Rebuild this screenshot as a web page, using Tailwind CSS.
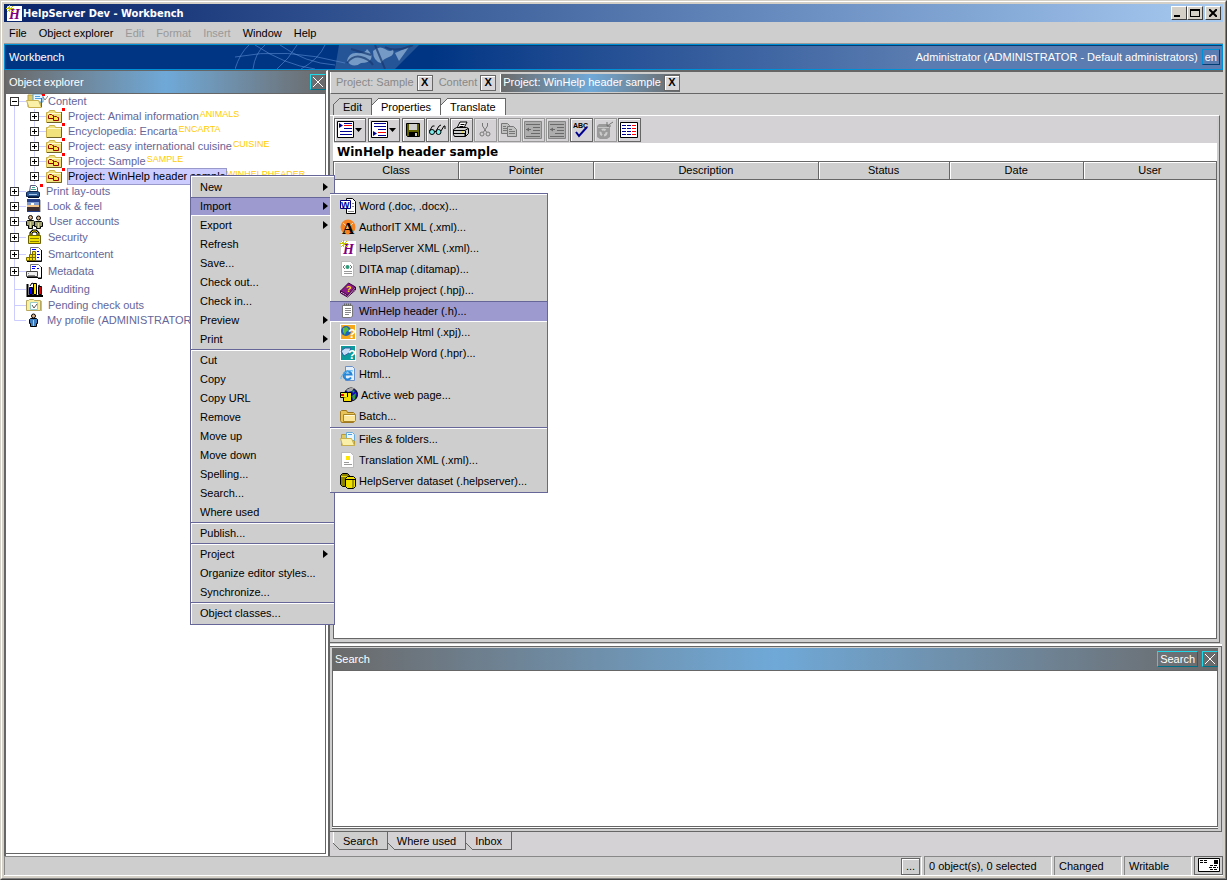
<!DOCTYPE html>
<html lang="en">

<head>
    <meta charset="UTF-8">
    <meta name="viewport" content="width=device-width, initial-scale=1.0">
    <script src="https://cdn.jsdelivr.net/npm/@tailwindcss/browser@4"></script>
    <title>HelpServer Dev - Workbench</title>
</head>

<body class="bg-[#d4d0c8] font-['Liberation_Sans',Arial,sans-serif] text-[11px] leading-[15px] text-black">

    <!-- Icon sprite -->
    <svg class="hidden" xmlns="http://www.w3.org/2000/svg">
        <!-- tree connectors -->
        <symbol id="t-plus" viewBox="0 0 20 19">
            <path d="M8.5 0v19M13 9.5h7" stroke="#ccccff" fill="none" />
            <rect x="4.5" y="5.5" width="8" height="8" fill="#fff" stroke="#333" />
            <path d="M6 9.5h5M8.5 7v5" stroke="#000" fill="none" />
        </symbol>
        <symbol id="t-minus" viewBox="0 0 20 19">
            <path d="M8.5 10v9M13 9.5h7" stroke="#ccccff" fill="none" />
            <rect x="4.5" y="5.5" width="8" height="8" fill="#fff" stroke="#333" />
            <path d="M6 9.5h5" stroke="#000" fill="none" />
        </symbol>
        <symbol id="t-line" viewBox="0 0 20 19">
            <path d="M8.5 0v19" stroke="#ccccff" fill="none" />
        </symbol>
        <symbol id="t-tee" viewBox="0 0 20 19">
            <path d="M8.5 0v19M8 9.5h12" stroke="#ccccff" fill="none" />
        </symbol>
        <symbol id="t-end" viewBox="0 0 20 19">
            <path d="M8.5 0v9.5h12" stroke="#ccccff" fill="none" />
        </symbol>

        <symbol id="i-folder" viewBox="0 0 20 16">
            <path d="M.5 4.500h2l1-2h5l1 2h6v10H.5z" fill="#f2e27e" stroke="#c9b04a" />
            <path d="M2 5.500h13" stroke="#fffbd0" />
            <path d="M1 14.500h14.500V4" fill="none" stroke="#6e6228" />
            <path d="M16 0h3v3h-3z" fill="#f00" />
        </symbol>
        <symbol id="i-project" viewBox="0 0 20 16">
            <path d="M.5 4.500h2l1-2h5l1 2h6v10H.5z" fill="#f2e27e" stroke="#c9b04a" />
            <path d="M2 5.500h13" stroke="#fffbd0" />
            <path d="M1 14.500h14.500V4" fill="none" stroke="#6e6228" />
            <path d="M2.500 10.500v-3l1-1h2l1 1h1v3zM7.500 12.500v-3l1-1h2l1 1h1v3z" fill="#ffe84a" stroke="#900000" />
            <path d="M16 0h3v3h-3z" fill="#f00" />
        </symbol>
        <symbol id="i-open" viewBox="0 0 22 16">
            <path d="M2 2h5l1 2h7v10H2z" fill="#dfca62" stroke="#b89c3c" />
            <path d="M7 1h8l2 2v6H7z" fill="#e8f6ff" stroke="#5a9ed0" />
            <path d="M9 3.500h5M9 5.500h6" stroke="#4aa0e0" />
            <path d="M0.500 7.500h12l3 7H3z" fill="#faf0a8" stroke="#c8b050" />
            <path d="M15.500 14V5" stroke="#6e6228" />
            <path d="M17 4l2 3 3-4" stroke="#808080" fill="none" />
            <path d="M16 0h3v3h-3z" fill="#f00" />
        </symbol>
        <symbol id="i-print" viewBox="0 0 18 15">
            <path d="M4.500 1.500h5l2 2v5h-8z" fill="#fff" stroke="#557" />
            <path d="M6 3.500h3M5 5.500h5" stroke="#3aa08c" />
            <path d="M.5 8.500l2-1h9l2 1v4H.5z" fill="#2d5a94" stroke="#0c2350" />
            <path d="M3 10.500h8" stroke="#a9c8ee" />
            <path d="M2 13.500h11" stroke="#001030" />
            <path d="M14 0h3v3h-3z" fill="#f00" />
        </symbol>
        <symbol id="i-look" viewBox="0 0 16 14">
            <path d="M1 0h13v13H1z" fill="#27408a" />
            <path d="M1 3h12v3H1z" fill="#7f9ad0" />
            <path d="M1 6h12v2H1z" fill="#f2c48c" />
            <path d="M5 4h3v2H5z" fill="#fff" />
            <path d="M1 8h12v4H1z" fill="#3c2c30" />
            <path d="M14.500 1v12" stroke="#bbb" />
        </symbol>
        <symbol id="i-users" viewBox="0 0 17 15">
            <circle cx="4.500" cy="3.500" r="2" fill="#e0b890" stroke="#000" />
            <circle cx="12.500" cy="4" r="2" fill="#e0b890" stroke="#000" />
            <path d="M.5 7.500l1-1h6l1 1v4h-2v3h-4v-3h-2zM8.500 8.500l1-1h6l1 1v4h-2v2h-4v-2h-2z" fill="#a0a070" stroke="#000" />
            <path d="M4.500 8v6M12.500 9v5" stroke="#d8d8a0" />
        </symbol>
        <symbol id="i-lock" viewBox="0 0 14 16">
            <path d="M4 7V4l2-2h3l2 2v3" fill="none" stroke="#000" stroke-width="3" />
            <path d="M4 7V4l2-2h3l2 2v3" fill="none" stroke="#e8d800" />
            <path d="M1.500 6.500h12v8h-12z" fill="#f0e000" stroke="#6a6000" />
            <path d="M3 9.500h9M3 12.500h9" stroke="#8a8000" />
        </symbol>
        <symbol id="i-smart" viewBox="0 0 17 16">
            <path d="M4.500 1.500h8l3 3v10h-11z" fill="#fff" stroke="#777" />
            <path d="M6 3.500h4M11 5.500h2M8 6.500h2M11 8.500h3M11 11.500h2" stroke="#00f" />
            <path d="M.5 11.500h3v-3h3v-3h3v9H.5z" fill="#f8e400" stroke="#7a6c00" />
            <path d="M3.500 11v4M6.500 8v7M1 11.500h9M4 8.500h6" stroke="#7a6c00" />
            <path d="M1 15.500h14.500V4" fill="none" stroke="#000" />
        </symbol>
        <symbol id="i-meta" viewBox="0 0 17 16">
            <path d="M4.500 1.500h8l3 3v10h-11z" fill="#fff" stroke="#777" />
            <path d="M6 3.500h4M6 5.500h3M11 5.500h2" stroke="#00f" />
            <path d="M.5 8.500h11v5H.5z" fill="#eee" stroke="#444" />
            <path d="M2 10.500h1M2 12.500h7" stroke="#888" />
            <path d="M1 14.500h11M12 15.500h3.500V4" fill="none" stroke="#000" />
        </symbol>
        <symbol id="i-audit" viewBox="0 0 18 16">
            <path d="M1.500 3v12H17" fill="none" stroke="#000" stroke-width="2" />
            <path d="M3.500 6.500h3v7h-3z" fill="#00f" stroke="#000" />
            <path d="M7.500 2.500h3v11h-3z" fill="#ffe600" stroke="#000" />
            <path d="M12.500 5.500h3v8h-3z" fill="#e00000" stroke="#000" />
            <path d="M4 5l2-3 2 1M12 5l2-1" stroke="#000" fill="none" />
        </symbol>
        <symbol id="i-pending" viewBox="0 0 17 14">
            <path d="M.5 2.500h2l1-1h4l1 1h6v10H.5z" fill="#f8f0a0" stroke="#b8a860" />
            <path d="M4.500 4.500h7v7h-7z" fill="#fff" stroke="#9cc" />
            <path d="M6 7l2 3 3-4" fill="none" stroke="#555" />
            <path d="M15.500 3v10" stroke="#bbb" />
        </symbol>
        <symbol id="i-person" viewBox="0 0 14 14">
            <circle cx="7.500" cy="3" r="2" fill="#e0b890" stroke="#000" />
            <path d="M3.500 6.500l1-1h6l1 1v4h-1v3h-6v-3h-1z" fill="#3e7cc0" stroke="#000" />
            <path d="M7.500 7v6" stroke="#9cd0ff" />
        </symbol>

        <!-- import menu icons -->
        <symbol id="i-hs" viewBox="0 0 16 16">
            <path d="M1 1h15v15H1z" fill="#fff" />
            <text x="3" y="14" font-family="Liberation Serif" font-size="14" font-weight="bold" font-style="italic" fill="#800080">H</text>
            <path d="M1 1l6 6M7 1L1 7M3.500 0v7M0 3.500h8" stroke="#c8c800" />
        </symbol>
        <symbol id="i-word" viewBox="0 0 16 16">
            <path d="M6.500.5h6l3 3v12h-9z" fill="#fff" stroke="#000" />
            <path d="M12 5.500h2M12 8.500h2M8 13.500h6" stroke="#888" />
            <path d="M.5 2.500h10v8H.5z" fill="#fff" stroke="#000080" />
            <text x="1" y="10" font-family="Liberation Sans" font-size="9" font-weight="bold" fill="#0000a0">W</text>
        </symbol>
        <symbol id="i-author" viewBox="0 0 16 16">
            <circle cx="8" cy="8" r="7.500" fill="#f58220" />
            <path d="M3 4l10 9M4 12l9-8" stroke="#ffd9b0" />
            <text x="2" y="15" font-family="Liberation Serif" font-size="17" font-weight="bold" fill="#000">A</text>
        </symbol>
        <symbol id="i-dita" viewBox="0 0 16 16">
            <path d="M1.500.5h9l3 3v12h-12z" fill="#fff" stroke="#bbb" />
            <path d="M5 4L3 6l2 2M10 4l2 2-2 2" fill="none" stroke="#777" />
            <circle cx="7.500" cy="6" r="2" fill="#2e9a7a" />
            <path d="M4 10.500h8M4 12.500h8" stroke="#999" />
        </symbol>
        <symbol id="i-book" viewBox="0 0 16 16">
            <path d="M.5 9l8-8 7 4-8 8z" fill="#8a1a8a" stroke="#400040" />
            <path d="M.5 9l7 4 8-8v3l-8 7-7-4z" fill="#fff" stroke="#400040" />
            <path d="M1 11l6 3 8-7" fill="none" stroke="#600060" />
            <text x="6" y="10" font-family="Liberation Sans" font-size="9" font-weight="bold" fill="#ffe000">?</text>
        </symbol>
        <symbol id="i-note" viewBox="0 0 16 16">
            <path d="M2.500 2.500h10v11l-2 1h-8z" fill="#fff" stroke="#777" />
            <path d="M4 1.500h8" stroke="#666" stroke-dasharray="1 1" stroke-width="2" />
            <path d="M5 5.500h6M5 7.500h6M5 9.500h6M5 11.500h4" stroke="#888" />
        </symbol>
        <symbol id="i-rhtml" viewBox="0 0 16 16">
            <path d="M0 0h16v16H0z" fill="#fff" />
            <path d="M1 1h14v14H1z" fill="#f5a81c" />
            <circle cx="6" cy="7" r="5" fill="#1c62b8" />
            <path d="M3 4l4-1 2 3-3 2-1 3-2-3z" fill="#5dbb3c" />
            <text x="8" y="14" font-family="Liberation Sans" font-size="13" font-weight="bold" fill="#fff">?</text>
        </symbol>
        <symbol id="i-rword" viewBox="0 0 16 16">
            <path d="M0 0h16v16H0z" fill="#fff" />
            <path d="M1 1h14v14H1z" fill="#0d9a9a" />
            <path d="M1 6l4-3h6l-2 5-5 3z" fill="#c8dcf4" stroke="#2860a0" />
            <text x="8" y="14" font-family="Liberation Sans" font-size="13" font-weight="bold" fill="#fff">?</text>
        </symbol>
        <symbol id="i-ie" viewBox="0 0 16 16">
            <path d="M5.500.5h7l2 2v12h-9z" fill="#e4f0fc" stroke="#6a90c8" />
            <path d="M11 11.500a4 4 0 1 1 .5-3H4" fill="none" stroke="#2484d8" stroke-width="2" />
            <path d="M1 13C0 9 8 3 13 5" fill="none" stroke="#58b4f0" />
        </symbol>
        <symbol id="i-web" viewBox="0 0 18 16">
            <circle cx="11" cy="7.500" r="6.500" fill="#1010b0" stroke="#000" />
            <path d="M6 3l4-2h4l-2 3-4 1z" fill="#aaa" />
            <path d="M12 9l4-3-1 6-2 1zM12 3l3 1-2 2z" fill="#2f9a3c" />
            <path d="M6.500 9.500v-4h5v7h-8v-2z" fill="#f8e000" stroke="#000" />
            <path d="M.5 5.500h7v5h-7z" fill="#ffec20" stroke="#000" />
            <path d="M3.500 10.500v4h8v-5" fill="#f8e000" stroke="#000" />
            <path d="M1 7h3v2H1z" fill="#f00" />
        </symbol>
        <symbol id="i-batch" viewBox="0 0 16 16">
            <path d="M.5 12.500v-9l1-1h5l1 2h6l1 1v8l-1 1h-12z" fill="#e8c458" stroke="#a07820" />
            <path d="M3.500 6.500h12v6l-1 1h-11z" fill="#fbe69a" stroke="#a88428" />
            <path d="M4.500 7.500h10" stroke="#fffbe0" />
        </symbol>
        <symbol id="i-files" viewBox="0 0 16 16">
            <path d="M1.500 3.500h5l1 1h7v10h-13z" fill="#dfca62" stroke="#b89c3c" />
            <path d="M6.500 1.500h6l2 2v6h-8z" fill="#eaf6ff" stroke="#6aaad8" />
            <path d="M8 3.500h4" stroke="#4aa0e0" />
            <path d="M.5 7.500h11l3 7h-12z" fill="#faf0a8" stroke="#c8b050" />
        </symbol>
        <symbol id="i-trans" viewBox="0 0 16 16">
            <path d="M1.500.5h9l3 3v12h-12z" fill="#fff" stroke="#bbb" />
            <path d="M6 4h4v4H6z" fill="#ffe600" />
            <path d="M4 10.500h5M4 12.500h8" stroke="#999" />
        </symbol>
        <symbol id="i-data" viewBox="0 0 16 16">
            <path d="M.5 2.500l2-2h5l2 2v9l-2 2h-5l-2-2z" fill="#8c8400" stroke="#000" />
            <path d="M1 3.500h8" stroke="#e8dc00" />
            <path d="M5.500 5.500l2-2h6l2 2v8l-2 2h-6l-2-2z" fill="#f0e000" stroke="#000" />
            <path d="M6 6.500h9" stroke="#000" />
            <path d="M13 7v8" stroke="#a09800" stroke-width="2" />
        </symbol>

        <!-- toolbar icons -->
        <symbol id="b-above" viewBox="0 0 18 18">
            <path d="M.5.5h16v16H.5z" fill="#fff" stroke="#000" />
            <path d="M2 2v5l4-2.500z" fill="#000090" />
            <path d="M7 4.500h8" stroke="#f00" />
            <path d="M7 2.500h8M7 7.500h8M3 10.500h12M3 13.500h12" stroke="#000090" />
        </symbol>
        <symbol id="b-below" viewBox="0 0 18 18">
            <path d="M.5.5h16v16H.5z" fill="#fff" stroke="#000" />
            <path d="M2 10v5l4-2.500z" fill="#000090" />
            <path d="M7 11.500h8" stroke="#f00" />
            <path d="M3 2.500h12M3 5.500h12M7 8.500h8M7 14.500h8" stroke="#000090" />
        </symbol>
        <symbol id="b-save" viewBox="0 0 16 16">
            <path d="M1.500 1.500h13v13h-12l-1-1z" fill="#606000" stroke="#000" />
            <path d="M4 2h8v6H4z" fill="#cecece" />
            <path d="M4 10h9v5H4z" fill="#000" />
            <path d="M10 11h2v3h-2z" fill="#cecece" />
        </symbol>
        <symbol id="b-glasses" viewBox="0 0 18 16">
            <circle cx="4" cy="10" r="2.500" fill="#7ff0f0" stroke="#000" />
            <circle cx="10.500" cy="10" r="2.500" fill="#7ff0f0" stroke="#000" />
            <path d="M1.500 9l3-5h2M8 9l3-5 2-1M6.500 9.500h2M13 9l3-5h1v3" fill="none" stroke="#000" />
        </symbol>
        <symbol id="b-print" viewBox="0 0 18 17">
            <path d="M5 7l3-6h7l-3 6z" fill="#fff" stroke="#000" />
            <path d="M8.500 3.500h4M7.500 5.500h4" stroke="#000" />
            <path d="M1.500 8.500l3-2h10l2 1v5l-3 3h-11l-1-2z" fill="#cecece" stroke="#000" />
            <path d="M2 9.500h11l3-2M2 12.500h11v3M13.500 10v5" fill="none" stroke="#000" />
            <path d="M9 11h3" stroke="#ffe600" />
        </symbol>
        <symbol id="b-cut" viewBox="0 0 16 16">
            <path d="M5.500 1v3l4 6M10.500 1v3l-4 6" fill="none" stroke="#777" />
            <circle cx="5" cy="12" r="2" fill="none" stroke="#777" />
            <circle cx="11" cy="12" r="2" fill="none" stroke="#777" />
        </symbol>
        <symbol id="b-copy" viewBox="0 0 16 16">
            <path d="M.5 1.500h6l2 2v8h-8z" fill="#c0c0c0" stroke="#777" />
            <path d="M2 4.500h3M2 6.500h4M2 8.500h4" stroke="#777" />
            <path d="M6.500 4.500h6l3 3v7h-9z" fill="#c0c0c0" stroke="#777" />
            <path d="M8 7.500h3M8 9.500h6M8 11.500h6" stroke="#777" />
        </symbol>
        <symbol id="b-indent" viewBox="0 0 18 18">
            <path d="M.5.500h17v17H.5z" fill="#adadad" stroke="#858585" />
            <path d="M2 3.500h14M9 6.500h7M9 9.500h7M7 12.500h9M2 15.500h14M2 8.500h5" stroke="#6a6a6a" />
            <path d="M2 8.500l3-2v4z" fill="#6a6a6a" />
        </symbol>
        <symbol id="b-spell" viewBox="0 0 18 18">
            <text x="1" y="7" font-family="Liberation Sans" font-size="7" font-weight="bold" fill="#000">ABC</text>
            <path d="M4 11l3 4 8-9" fill="none" stroke="#000090" stroke-width="2" />
        </symbol>
        <symbol id="b-bin" viewBox="0 0 18 18">
            <path d="M1 5l2-2h8l3 2v11l-3 2H4l-3-2z" fill="#9a9a9a" />
            <path d="M2 6.500h11" stroke="#c4c4c4" />
            <circle cx="7.500" cy="11.500" r="3" fill="none" stroke="#ccc" stroke-width="2" stroke-dasharray="4 2" />
            <path d="M11 5l6-4M11 1v4h4" fill="none" stroke="#777" />
        </symbol>
        <symbol id="b-list" viewBox="0 0 18 18">
            <path d="M.5 1.500h17v15H.5z" fill="#fff" stroke="#000" />
            <path d="M2 4.500h4M7 4.500h4M2 7.500h4M7 7.500h4M2 10.500h4M7 10.500h4M2 13.500h4M7 13.500h4" stroke="#000090" />
            <path d="M12 4.500h4M12 7.500h4M12 10.500h4M12 13.500h4" stroke="#f00" />
        </symbol>
        <symbol id="b-mail" viewBox="0 0 22 14">
            <path d="M.5.500h21v13H.5z" fill="#fff" stroke="#000" />
            <path d="M2 2.500h7M2 4.500h7M12 7.500h8M11 9.500h9M12 11.500h7" stroke="#000" stroke-dasharray="3 1" />
            <path d="M16 2h4v4h-4z" fill="#000" />
        </symbol>

        <symbol id="x" viewBox="0 0 12 12">
            <path d="M1 1l10 10M11 1L1 11" stroke="#fff" fill="none" />
        </symbol>
        <symbol id="arrow" viewBox="0 0 5 8">
            <path d="M0 0v8l5-4z" fill="#000" />
        </symbol>
        <symbol id="corner" viewBox="0 0 7 7">
            <path d="M0 0h7L0 7z" fill="#cecece" />
            <path d="M0 7l7-7" stroke="#666" fill="none" />
        </symbol>
    </svg>

    <main class="relative flex h-screen min-h-[660px] flex-col border border-[#d4d0c8] border-r-[#404040] border-b-[#404040]">
        <div class="flex min-h-0 flex-1 flex-col border border-white border-r-[#808080] border-b-[#808080] p-0.5">

            <!-- Title bar -->
            <header class="flex h-[18px] shrink-0 items-center bg-linear-to-r from-[#0a246a] to-[#a6caf0] pr-0.5 pl-0.5">
                <svg class="size-4"><use href="#i-hs" /></svg>
                <h1 class="ml-px flex-1 font-['DejaVu_Sans_Condensed','DejaVu_Sans',sans-serif] text-[11px] font-bold text-white">HelpServer Dev - Workbench</h1>
                <button aria-label="Minimize" class="flex h-3.5 w-4 items-end border border-white border-r-[#404040] border-b-[#404040] bg-[#d4d0c8] p-0.5"><span class="h-0.5 w-1.5 bg-black"></span></button>
                <button aria-label="Maximize" class="h-3.5 w-4 border border-white border-r-[#404040] border-b-[#404040] bg-[#d4d0c8] p-0.5"><span class="block h-full w-2.5 border border-t-2 border-black"></span></button>
                <button aria-label="Close" class="ml-0.5 flex h-3.5 w-4 items-center justify-center border border-white border-r-[#404040] border-b-[#404040] bg-[#d4d0c8]"><svg class="size-2" viewBox="0 0 8 8"><path d="M0 0l8 8M8 0L0 8" stroke="#000" stroke-width="2" /></svg></button>
            </header>

            <!-- Menu bar -->
            <nav class="flex h-[22px] shrink-0 items-center gap-3 border-b border-[#999] bg-[#cecece] px-[5px] pt-px">
                <button>File</button>
                <button>Object explorer</button>
                <button class="text-[#999]" disabled>Edit</button>
                <button class="text-[#999]" disabled>Format</button>
                <button class="text-[#999]" disabled>Insert</button>
                <button>Window</button>
                <button>Help</button>
            </nav>

            <!-- Banner -->
            <div class="relative flex h-[26px] shrink-0 items-center overflow-hidden border border-[#0090d8] bg-linear-to-r from-[#003584] from-35% to-[#5a7cb0] to-75% pr-0.5 pl-1 text-white shadow-[inset_1px_1px_#003c74]">
                <svg class="absolute top-0 left-[230px] h-6 w-[200px]" viewBox="0 0 200 24" fill="none">
                    <path d="M104 0h80l-24 24h-60z" fill="#3f6aa4" opacity=".6" />
                    <path d="M0 24Q5 8 14 0M18 24Q20 8 30 0M42 24Q54 14 62 0M66 24Q84 14 90 0M20 0Q50 20 80 24M45 0Q70 18 100 20M0 12Q50 2 110 18" stroke="#5c8cd0" opacity=".6" />
                    <path d="M112 16q2-9 10-8t10-4q6 6 4 10t-10 4q-8 6-14-2zM138 6q6-6 12-2t8 0q2 6-4 8t-8 6q-8-2-8-12zM160 8l14-6-10 14z" fill="#a9c8e4" opacity=".6" />
                    <path d="M112 18q6-8 14-6t12 8M140 0l10 24M150 2q10 6 28-2M116 4l20 6" stroke="#17376f" stroke-width="2" opacity=".7" />
                </svg>
                <h2 class="relative flex-1">Workbench</h2>
                <span class="mr-1">Administrator (ADMINISTRATOR - Default administrators)</span>
                <button class="h-4 border border-[#0090d8] border-r-[#003c74] border-b-[#003c74] px-0.5 leading-[14px]">en</button>
            </div>

            <div class="flex min-h-0 flex-1 bg-[#cecece]">
                <!-- Object explorer -->
                <aside class="flex w-[324px] shrink-0 flex-col border-t border-r-2 border-l-2 border-[#666] border-r-white">
                    <div class="flex h-[23px] shrink-0 items-center border-b border-[#666] bg-linear-to-r from-[#6a6a6a] via-[#6fa9d8] to-[#6a6a6a] pl-[3px] text-white">
                        <h2 class="flex-1">Object explorer</h2>
                        <button aria-label="Close explorer" class="flex size-4 items-center justify-center border border-[#20d8e8] border-r-[#007088] border-b-[#007088]"><svg class="size-3"><use href="#x" /></svg></button>
                    </div>
                    <ul class="flex-1 overflow-hidden border-r border-b border-[#666] bg-white whitespace-nowrap text-[#666699]">
                        <li class="flex h-[15px] items-center"><svg class="h-full w-5"><use href="#t-minus" y="-2" height="19" /></svg><svg class="mb-px h-4 w-[22px]"><use href="#i-open" /></svg>Content</li>
                        <li class="flex h-[15px] items-center"><svg class="h-full w-5"><use href="#t-line" y="-2" height="19" /></svg><svg class="h-full w-5"><use href="#t-plus" y="-2" height="19" /></svg><svg class="mr-0.5 mb-px h-4 w-5"><use href="#i-project" /></svg>Project: Animal information<span class="mb-1 ml-px text-[9px] text-[#ffcc00]">ANIMALS</span></li>
                        <li class="flex h-[15px] items-center"><svg class="h-full w-5"><use href="#t-line" y="-2" height="19" /></svg><svg class="h-full w-5"><use href="#t-plus" y="-2" height="19" /></svg><svg class="mr-0.5 mb-px h-4 w-5"><use href="#i-folder" /></svg>Encyclopedia: Encarta<span class="mb-1 ml-px text-[9px] text-[#ffcc00]">ENCARTA</span></li>
                        <li class="flex h-[15px] items-center"><svg class="h-full w-5"><use href="#t-line" y="-2" height="19" /></svg><svg class="h-full w-5"><use href="#t-plus" y="-2" height="19" /></svg><svg class="mr-0.5 mb-px h-4 w-5"><use href="#i-project" /></svg>Project: easy international cuisine<span class="mb-1 ml-px text-[9px] text-[#ffcc00]">CUISINE</span></li>
                        <li class="flex h-[15px] items-center"><svg class="h-full w-5"><use href="#t-line" y="-2" height="19" /></svg><svg class="h-full w-5"><use href="#t-plus" y="-2" height="19" /></svg><svg class="mr-0.5 mb-px h-4 w-5"><use href="#i-project" /></svg>Project: Sample<span class="mb-1 ml-px text-[9px] text-[#ffcc00]">SAMPLE</span></li>
                        <li class="flex h-[15px] items-center"><svg class="h-full w-5"><use href="#t-line" y="-2" height="19" /></svg><svg class="h-full w-5"><use href="#t-plus" y="-2" height="19" /></svg><svg class="mr-0.5 mb-px h-4 w-5"><use href="#i-project" /></svg><span class="bg-[#ccccff] text-black outline outline-[#9999cc]">Project: WinHelp header sample</span><span class="mb-1 ml-px text-[9px] text-[#ffcc00]">WINHELPHEADER</span></li>
                        <li class="flex h-[15px] items-center"><svg class="h-full w-5"><use href="#t-plus" y="-2" height="19" /></svg><svg class="mr-0.5 h-[15px] w-[18px]"><use href="#i-print" /></svg>Print lay-outs</li>
                        <li class="flex h-[15px] items-center"><svg class="h-full w-5"><use href="#t-plus" y="-2" height="19" /></svg><svg class="mr-[5px] mb-px h-3.5 w-4"><use href="#i-look" /></svg>Look &amp; feel</li>
                        <li class="flex h-[15px] items-center"><svg class="h-full w-5"><use href="#t-plus" y="-2" height="19" /></svg><svg class="mr-1.5 h-[15px] w-[17px]"><use href="#i-users" /></svg>User accounts</li>
                        <li class="flex h-[17px] items-center"><svg class="h-full w-5"><use href="#t-plus" y="-1" height="19" /></svg><svg class="mr-[7px] mb-px ml-px h-4 w-3.5"><use href="#i-lock" /></svg>Security</li>
                        <li class="flex h-[17px] items-center"><svg class="h-full w-5"><use href="#t-plus" y="-1" height="19" /></svg><svg class="mr-[5px] mb-px h-4 w-[17px]"><use href="#i-smart" /></svg>Smartcontent</li>
                        <li class="flex h-[17px] items-center"><svg class="h-full w-5"><use href="#t-plus" y="-1" height="19" /></svg><svg class="mr-[5px] mb-px h-4 w-[17px]"><use href="#i-meta" /></svg>Metadata</li>
                        <li class="flex h-[18px] items-center"><svg class="h-full w-5"><use href="#t-tee" height="19" /></svg><svg class="mr-1.5 h-4 w-[18px]"><use href="#i-audit" /></svg>Auditing</li>
                        <li class="flex h-[15px] items-center"><svg class="h-full w-5"><use href="#t-tee" y="-2" height="19" /></svg><svg class="mr-[5px] mb-px h-3.5 w-[17px]"><use href="#i-pending" /></svg>Pending check outs</li>
                        <li class="flex h-[15px] items-center"><svg class="h-full w-5"><use href="#t-end" y="-2" height="19" /></svg><svg class="mr-[7px] mb-px h-3.5 w-3.5"><use href="#i-person" /></svg>My profile (ADMINISTRATOR)</li>
                    </ul>
                    <div class="h-0.5 shrink-0 bg-white"></div>
                </aside>

                <div class="flex min-w-0 flex-1 flex-col border-t-2 border-l-2 border-[#666]">
                    <!-- Open documents -->
                    <div class="flex h-[22px] shrink-0 items-center border-b border-l border-[#666] border-l-white pl-[5px] text-[#888]">
                        <a href="#">Project: Sample</a>
                        <button aria-label="Close Project: Sample" class="ml-[3px] flex size-4 items-center justify-center border border-[#666] bg-[#d8d6d8] font-bold text-black shadow-[inset_1px_1px_#fff]">X</button>
                        <a href="#" class="ml-1.5">Content</a>
                        <button aria-label="Close Content" class="ml-[3px] flex size-4 items-center justify-center border border-[#666] bg-[#d8d6d8] font-bold text-black shadow-[inset_1px_1px_#fff]">X</button>
                        <div class="ml-1 flex h-[18px] items-center border-l border-white bg-linear-to-r from-[#6a6a6a] via-[#6fa9d8] to-[#6a6a6a] pl-0.5 text-white">
                            <a href="#">Project: WinHelp header sample</a>
                            <button aria-label="Close Project: WinHelp header sample" class="ml-[3px] flex size-4 items-center justify-center border border-[#666] bg-[#d8d6d8] font-bold text-black shadow-[inset_1px_1px_#fff]">X</button>
                        </div>
                    </div>

                    <!-- View tabs -->
                    <div class="flex h-[21px] shrink-0 items-end pl-[3px]">
                        <button class="relative h-[17px] border-t border-r border-l border-[#666] bg-[#cecece] px-[9px] leading-4"><svg class="absolute -top-px -left-px size-[7px]"><use href="#corner" /></svg>Edit</button>
                        <button class="relative h-[17px] border-t border-r border-[#666] bg-white px-[9px] leading-4"><svg class="absolute -top-px left-0 size-[7px]"><use href="#corner" /></svg>Properties</button>
                        <button class="relative h-[17px] border-t border-r border-[#666] bg-white px-[9px] leading-4"><svg class="absolute -top-px left-0 size-[7px]"><use href="#corner" /></svg>Translate</button>
                    </div>

                    <section class="mr-[3px] flex min-h-0 flex-1 flex-col border-t border-r border-b border-white border-r-[#666] border-b-[#666] pr-0.5 pb-[3px] pl-[3px]">
                        <!-- Toolbar -->
                        <div class="flex h-[27px] shrink-0 items-center gap-0.5 border-l border-white bg-[#d4d2d4]">
                            <button aria-label="Insert above" class="flex h-6 w-8 items-center justify-between border border-[#666] px-0.5 shadow-[inset_1px_1px_#fff]"><svg class="size-[18px]"><use href="#b-above" /></svg><svg class="mr-px h-1 w-[7px]" viewBox="0 0 7 4"><path d="M0 0h7L3.500 4z" /></svg></button>
                            <button aria-label="Insert below" class="flex h-6 w-8 items-center justify-between border border-[#666] px-0.5 shadow-[inset_1px_1px_#fff]"><svg class="size-[18px]"><use href="#b-below" /></svg><svg class="mr-px h-1 w-[7px]" viewBox="0 0 7 4"><path d="M0 0h7L3.500 4z" /></svg></button>
                            <div class="flex gap-px [&_svg]:mr-px">
                                <button aria-label="Save" class="flex h-6 w-[23px] items-center justify-center border border-[#666] shadow-[inset_1px_1px_#fff]"><svg class="size-4"><use href="#b-save" /></svg></button>
                                <button aria-label="View" class="flex h-6 w-[23px] items-center justify-center border border-[#666] shadow-[inset_1px_1px_#fff]"><svg class="h-4 w-[18px]"><use href="#b-glasses" /></svg></button>
                                <button aria-label="Print" class="flex h-6 w-[23px] items-center justify-center border border-[#666] shadow-[inset_1px_1px_#fff]"><svg class="mb-px h-[17px] w-[18px]"><use href="#b-print" /></svg></button>
                                <button aria-label="Cut" disabled class="flex h-6 w-[23px] items-center justify-center border border-[#999] shadow-[inset_1px_1px_#e4e4e4]"><svg class="size-4"><use href="#b-cut" /></svg></button>
                                <button aria-label="Copy" disabled class="flex h-6 w-[23px] items-center justify-center border border-[#999] shadow-[inset_1px_1px_#e4e4e4]"><svg class="size-4"><use href="#b-copy" /></svg></button>
                                <button aria-label="Outdent" disabled class="flex h-6 w-[23px] items-center justify-center border border-[#999] shadow-[inset_1px_1px_#e4e4e4]"><svg class="size-[18px]"><use href="#b-indent" /></svg></button>
                                <button aria-label="Indent" disabled class="flex h-6 w-[23px] items-center justify-center border border-[#999] shadow-[inset_1px_1px_#e4e4e4]"><svg class="size-[18px]"><use href="#b-indent" /></svg></button>
                                <button aria-label="Spelling" class="flex h-6 w-[23px] items-center justify-center border border-[#666] shadow-[inset_1px_1px_#fff]"><svg class="size-[18px]"><use href="#b-spell" /></svg></button>
                                <button aria-label="Recycle" disabled class="flex h-6 w-[23px] items-center justify-center border border-[#999] shadow-[inset_1px_1px_#e4e4e4]"><svg class="size-[18px]"><use href="#b-bin" /></svg></button>
                                <button aria-label="List" class="flex h-6 w-[23px] items-center justify-center border border-[#666] shadow-[inset_1px_1px_#fff]"><svg class="size-[18px]"><use href="#b-list" /></svg></button>
                            </div>
                        </div>
                        <h2 class="h-[18px] shrink-0 bg-white pl-1 font-['DejaVu_Sans',sans-serif] text-[12px] leading-[18px] font-bold">WinHelp header sample</h2>
                        <div class="flex-1 border border-[#666] border-t-0 bg-white">
                            <table class="w-full table-fixed border-separate border-spacing-0">
                                <colgroup>
                                    <col class="w-[125px]">
                                    <col class="w-[135px]">
                                    <col class="w-[224px]">
                                    <col class="w-[131px]">
                                    <col class="w-[134px]">
                                    <col class="w-[132px]">
                                </colgroup>
                                <thead>
                                    <tr class="h-[19px] bg-[#cecece]">
                                        <th class="border-y border-r border-[#666] p-0 font-normal shadow-[inset_1px_1px_#fff]">Class</th>
                                        <th class="border-y border-r border-[#666] p-0 font-normal shadow-[inset_1px_1px_#fff]">Pointer</th>
                                        <th class="border-y border-r border-[#666] p-0 font-normal shadow-[inset_1px_1px_#fff]">Description</th>
                                        <th class="border-y border-r border-[#666] p-0 font-normal shadow-[inset_1px_1px_#fff]">Status</th>
                                        <th class="border-y border-r border-[#666] p-0 font-normal shadow-[inset_1px_1px_#fff]">Date</th>
                                        <th class="border-y border-[#666] p-0 font-normal shadow-[inset_1px_1px_#fff]">User</th>
                                    </tr>
                                </thead>
                            </table>
                        </div>
                    </section>

                    <!-- Search pane -->
                    <section class="mt-px mr-px flex h-[212px] shrink-0 flex-col border-t-2 border-white bg-[#d4d2d4]">
                        <div class="flex flex-1 flex-col border-t border-r border-b border-[#666] bg-[#cecece] pt-px pr-[3px] pb-0.5 pl-0.5">
                            <div class="flex h-[23px] shrink-0 items-center border-b border-[#666] bg-linear-to-r from-[#6a6a6a] via-[#6fa9d8] to-[#6a6a6a] pl-[3px] text-white">
                                <h2 class="flex-1">Search</h2>
                                <button class="mr-1 h-4 border border-[#20d8e8] border-r-[#007088] border-b-[#007088] px-[2px] leading-[14px]">Search</button>
                                <button aria-label="Close search" class="flex size-4 items-center justify-center border border-[#20d8e8] border-r-[#007088] border-b-[#007088]"><svg class="size-3"><use href="#x" /></svg></button>
                            </div>
                            <div class="flex-1 border-r border-b border-l border-[#666] bg-white"></div>
                            <div class="h-0.5 border-b border-[#666] bg-white"></div>
                        </div>
                        <div class="flex h-6 shrink-0 items-start pl-[3px]">
                            <button class="relative h-[18px] border-r border-b border-l border-[#666] border-l-white bg-[#cecece] px-[9px] pt-px"><svg class="absolute -bottom-px -left-px size-[7px] -scale-y-100"><use href="#corner" /></svg>Search</button>
                            <button class="relative h-[18px] border-r border-b border-[#666] px-[9px] pt-px"><svg class="absolute -bottom-px left-0 size-[7px] -scale-y-100"><use href="#corner" /></svg>Where used</button>
                            <button class="relative h-[18px] border-r border-b border-[#666] px-[9px] pt-px"><svg class="absolute -bottom-px left-0 size-[7px] -scale-y-100"><use href="#corner" /></svg>Inbox</button>
                        </div>
                    </section>
                </div>
            </div>

            <!-- Status bar -->
            <footer class="flex h-5 shrink-0 gap-0.5 border-b border-white bg-[#cecece]">
                <div class="flex flex-1 justify-end border-t border-r border-l border-[#888] border-r-white">
                    <button class="mt-px mr-px h-[17px] w-[19px] border border-[#666] leading-[15px] shadow-[inset_1px_1px_#fff]">...</button>
                </div>
                <div class="w-[128px] border-t border-r border-l border-[#888] border-r-white pl-1 leading-[18px]">0 object(s), 0 selected</div>
                <div class="w-[68px] border-t border-r border-l border-[#888] border-r-white pl-1 leading-[18px]">Changed</div>
                <div class="w-[68px] border-t border-r border-l border-[#888] border-r-white pl-1 leading-[18px]">Writable</div>
                <button aria-label="Messages" class="flex w-[29px] items-center justify-center border border-[#666] pl-px"><svg class="mb-px h-3.5 w-[22px]"><use href="#b-mail" /></svg></button>
            </footer>
        </div>

        <!-- Context menu -->
        <div role="menu" class="absolute top-[174px] left-[189px] flex w-[145px] flex-col border border-[#666699] bg-[#cecece] pt-px shadow-[inset_1px_1px_#fff] *:pl-[9px] *:text-left [&_svg]:mb-px">
            <button class="mt-px flex h-[19px] items-center justify-between pr-[6px]">New<svg class="h-2 w-[5px]"><use href="#arrow" /></svg></button>
            <button class="flex h-[19px] items-center justify-between bg-[#9c9ace] pr-[6px] shadow-[inset_0_1px_#666699,inset_0_-1px_#fff]">Import<svg class="h-2 w-[5px]"><use href="#arrow" /></svg></button>
            <button class="flex h-[19px] items-center justify-between pr-[6px]">Export<svg class="h-2 w-[5px]"><use href="#arrow" /></svg></button>
            <button class="h-[19px]">Refresh</button>
            <button class="h-[19px]">Save...</button>
            <button class="h-[19px]">Check out...</button>
            <button class="h-[19px]">Check in...</button>
            <button class="flex h-[19px] items-center justify-between pr-[6px]">Preview<svg class="h-2 w-[5px]"><use href="#arrow" /></svg></button>
            <button class="flex h-[19px] items-center justify-between pr-[6px]">Print<svg class="h-2 w-[5px]"><use href="#arrow" /></svg></button>
            <div class="h-0.5 border-t border-[#666699] bg-white"></div>
            <button class="h-[19px]">Cut</button>
            <button class="h-[19px]">Copy</button>
            <button class="h-[19px]">Copy URL</button>
            <button class="h-[19px]">Remove</button>
            <button class="h-[19px]">Move up</button>
            <button class="h-[19px]">Move down</button>
            <button class="h-[19px]">Spelling...</button>
            <button class="h-[19px]">Search...</button>
            <button class="h-[19px]">Where used</button>
            <div class="h-0.5 border-t border-[#666699] bg-white"></div>
            <button class="h-[19px]">Publish...</button>
            <div class="h-0.5 border-t border-[#666699] bg-white"></div>
            <button class="flex h-[19px] items-center justify-between pr-[6px]">Project<svg class="h-2 w-[5px]"><use href="#arrow" /></svg></button>
            <button class="h-[19px]">Organize editor styles...</button>
            <button class="h-[19px]">Synchronize...</button>
            <div class="h-0.5 border-t border-[#666699] bg-white"></div>
            <button class="mb-px h-[19px]">Object classes...</button>
        </div>

        <!-- Import submenu -->
        <div role="menu" class="absolute top-[192px] left-[329px] flex w-[218px] flex-col border-t border-r border-b border-[#666699] bg-[#cecece] pt-0.5 shadow-[inset_1px_1px_#fff] [&_svg]:mb-px">
            <button class="flex h-[21px] items-center gap-[3px] pl-[10px]"><svg class="size-4"><use href="#i-word" /></svg>Word (.doc, .docx)...</button>
            <button class="flex h-[21px] items-center gap-[3px] pl-[10px]"><svg class="size-4"><use href="#i-author" /></svg>AuthorIT XML (.xml)...</button>
            <button class="flex h-[21px] items-center gap-[3px] pl-[10px]"><svg class="size-4"><use href="#i-hs" /></svg>HelpServer XML (.xml)...</button>
            <button class="flex h-[21px] items-center gap-[3px] pl-[10px]"><svg class="size-4"><use href="#i-dita" /></svg>DITA map (.ditamap)...</button>
            <button class="flex h-[21px] items-center gap-[3px] pl-[10px]"><svg class="size-4"><use href="#i-book" /></svg>WinHelp project (.hpj)...</button>
            <button class="flex h-[21px] items-center gap-[3px] border-y border-t-[#666699] border-b-white bg-[#9c9ace] pl-[10px]"><svg class="size-4"><use href="#i-note" /></svg>WinHelp header (.h)...</button>
            <button class="flex h-[21px] items-center gap-[3px] pl-[10px]"><svg class="size-4"><use href="#i-rhtml" /></svg>RoboHelp Html (.xpj)...</button>
            <button class="flex h-[21px] items-center gap-[3px] pl-[10px]"><svg class="size-4"><use href="#i-rword" /></svg>RoboHelp Word (.hpr)...</button>
            <button class="flex h-[21px] items-center gap-[3px] pl-[10px]"><svg class="size-4"><use href="#i-ie" /></svg>Html...</button>
            <button class="flex h-[21px] items-center gap-[3px] pl-[10px]"><svg class="h-4 w-[18px]"><use href="#i-web" /></svg>Active web page...</button>
            <button class="flex h-[21px] items-center gap-[3px] pl-[10px]"><svg class="size-4"><use href="#i-batch" /></svg>Batch...</button>
            <div class="h-0.5 border-t border-[#666699] bg-white"></div>
            <button class="flex h-[21px] items-center gap-[3px] pl-[10px]"><svg class="size-4"><use href="#i-files" /></svg>Files &amp; folders...</button>
            <button class="flex h-[21px] items-center gap-[3px] pl-[10px]"><svg class="size-4"><use href="#i-trans" /></svg>Translation XML (.xml)...</button>
            <button class="flex h-[21px] items-center gap-[3px] pl-[10px]"><svg class="size-4"><use href="#i-data" /></svg>HelpServer dataset (.helpserver)...</button>
        </div>
    </main>
</body>

</html>
